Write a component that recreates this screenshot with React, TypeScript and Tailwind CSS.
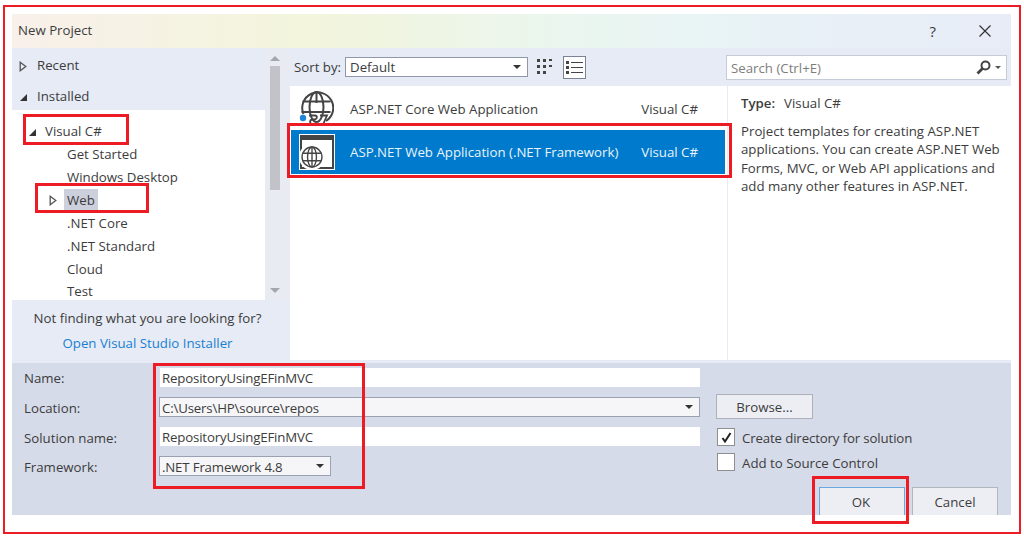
import React from "react";

const font = { fontFamily: '"Open Sans", "Noto Sans", sans-serif' };

function Tri({ open }: { open?: boolean }) {
  return open ? (
    <svg width="9" height="9" viewBox="0 0 9 9"><path d="M8 1v7H1z" fill="#333" /></svg>
  ) : (
    <svg width="8" height="11" viewBox="0 0 8 11"><path d="M1.2 1.2 6.8 5.5 1.2 9.8z" fill="none" stroke="#555" strokeWidth="1.3" /></svg>
  );
}

function Caret() {
  return <svg width="8" height="4" viewBox="0 0 8 4"><path d="M0 0h8L4 4z" fill="#333" /></svg>;
}

function Globe({ size, stroke }: { size: number; stroke: string }) {
  return (
    <svg width={size} height={size} viewBox="0 0 32 32" fill="none" stroke={stroke} strokeWidth="2">
      <circle cx="16" cy="16" r="14.5" />
      <ellipse cx="16" cy="16" rx="6.5" ry="14.5" />
      <path d="M16 1.5v29M2.5 10.5h27M2.5 21.5h27" />
    </svg>
  );
}

function CoreGlobe() {
  return (
    <svg width="35" height="35" viewBox="0 0 35 35" fill="none" stroke="#444" strokeWidth="2">
      <path d="M4.5 23A15.5 15.5 0 1 1 27 30" />
      <ellipse cx="17.5" cy="16" rx="7" ry="15" />
      <path d="M17.5 1v11M3.5 10.5h28M2.5 21h29" />
      <path d="M10 24.5h6c2.5 0 2.5 3.5 0 4h-3c-2.5.5-2.5 4.5 0 4.5h4" strokeWidth="1.8" />
      <path d="M21 24.5h7l-4 9" strokeWidth="1.8" />
      <circle cx="4" cy="27" r="3.2" fill="#1f86d8" stroke="none" />
    </svg>
  );
}

function TreeItem({ label, active, first }: { label: string; active?: boolean; first?: boolean }) {
  return (
    <div className={"flex shrink-0 items-center pl-[37px] " + (first ? "h-[22px]" : "h-[23px]")}>
      <div className="flex w-[18px] justify-start">{active && <Tri />}</div>
      <span className={active ? "bg-[#ccd0dd] px-[3px] -ml-[3px] leading-[23px]" : ""}>{label}</span>
    </div>
  );
}

function Nav() {
  return (
    <div className="flex w-[278px] shrink-0 flex-col">
      <div className="flex h-[252px]">
        <div className="flex w-[253px] flex-col">
          <div className="flex h-[62px] shrink-0 flex-col bg-[#e6ebf5] pt-[6px]">
            <div className="flex h-[24px] items-center pl-[7px]"><div className="flex w-[16px]"><Tri /></div><span className="ml-[2px]">Recent</span></div>
            <div className="mt-[7px] flex h-[24px] items-center pl-[7px]"><div className="flex w-[16px]"><Tri open /></div><span className="ml-[2px]">Installed</span></div>
          </div>
          <div className="flex flex-1 flex-col overflow-hidden bg-white pt-[10px]">
            <div className="flex h-[24px] shrink-0 items-center pl-[16px]"><div className="flex w-[17px]"><Tri open /></div>Visual C#</div>
            <TreeItem first label="Get Started" />
            <TreeItem label="Windows Desktop" />
            <TreeItem active label="Web" />
            <TreeItem label=".NET Core" />
            <TreeItem label=".NET Standard" />
            <TreeItem label="Cloud" />
            <div className="flex h-[22px] shrink-0 items-center pl-[55px]">Test</div>
          </div>
        </div>
        <div className="flex w-[25px] flex-col items-start bg-[#e9ebf3] pl-[5px]">
          <svg className="mt-[8px]" width="10" height="5" viewBox="0 0 10 5"><path d="M5 0l5 5H0z" fill="#a3a6ad" /></svg>
          <div className="mt-[5px] h-[124px] w-[10px] bg-[#c2c3c9]" />
          <svg className="mt-auto mb-[7px]" width="10" height="5" viewBox="0 0 10 5"><path d="M5 5l5-5H0z" fill="#a3a6ad" /></svg>
        </div>
      </div>
      <div className="flex flex-1 flex-col items-center bg-[#e6ebf5] pt-[7px] pr-[7px]">
        <div className="h-[22px] leading-[22px]">Not finding what you are looking for?</div>
        <div className="mt-[5px] text-[#1a7fd0]">Open Visual Studio Installer</div>
      </div>
    </div>
  );
}

function Toolbar() {
  return (
    <div className="flex h-[38px] shrink-0 items-center bg-[#e6ebf5] pl-[4px] pr-[4px]">
      <span className="pt-[2px]">Sort by:</span>
      <div className="ml-[4px] flex h-[20px] w-[183px] items-center justify-between border border-[#8f97a8] bg-white pl-[4px] pr-[6px]">
        <span className="pt-[2px]">Default</span><Caret />
      </div>
      <svg className="ml-[9px]" width="16" height="18" viewBox="0 0 16 18" fill="#444">
        <path d="M0 1h3v3H0zM6 1h3v3H6zM12 1h3v2h-3zM0 7h3v3H0zM6 7h3v3H6zM12 7h3v2h-3zM0 13h3v3H0zM6 13h3v3H6z" />
      </svg>
      <div className="ml-[10px] flex h-[23px] w-[23px] items-center justify-center border border-[#7a8294] bg-white">
        <svg width="17" height="15" viewBox="0 0 17 15" fill="#444">
          <path d="M0 1h3v3H0zM5 2h12v1H5zM0 6h3v3H0zM5 7h12v1H5zM0 11h3v3H0zM5 12h12v1H5z" />
        </svg>
      </div>
      <div className="ml-auto mt-[1px] flex h-[25px] w-[281px] items-center justify-between border border-[#c5cbd8] bg-white pl-[4px] pr-[5px] text-[#7d7d7d]">
        <span className="pt-[2px]">Search (Ctrl+E)</span>
        <span className="flex items-center gap-[4px]">
          <svg width="15" height="15" viewBox="0 0 15 15" fill="none" stroke="#444">
            <circle cx="9.5" cy="5.5" r="4" strokeWidth="2" />
            <path d="M6.5 8.5 1.5 13.5" strokeWidth="2.8" />
          </svg>
          <svg width="6" height="3" viewBox="0 0 6 3"><path d="M0 0h6L3 3z" fill="#555" /></svg>
        </span>
      </div>
    </div>
  );
}

function Templates() {
  return (
    <div className="flex w-[437px] shrink-0 flex-col bg-white">
      <div className="flex h-[44px] items-center pl-[9px] pr-[29px]">
        <div className="flex w-[51px]"><CoreGlobe /></div>
        <span className="pt-[3px]">ASP.NET Core Web Application</span>
        <span className="ml-auto pt-[3px]">Visual C#</span>
      </div>
      <div className="ml-[1px] mr-[2px] flex h-[44px] items-center bg-[#007acc] pl-[8px] pr-[27px] text-[#eaf4fb]">
        <div className="flex w-[51px]">
          <div className="relative flex h-[36px] w-[36px] flex-col items-start bg-white p-[1px]">
            <div className="h-full w-full border-[2px] border-t-[5px] border-[#444] bg-white" />
            <div className="absolute bottom-0 left-0 rounded-full bg-white p-[2px]"><Globe size={22} stroke="#444" /></div>
          </div>
        </div>
        <span className="pt-[2px]">ASP.NET Web Application (.NET Framework)</span>
        <span className="ml-auto pt-[2px]">Visual C#</span>
      </div>
    </div>
  );
}

function Details() {
  return (
    <div className="flex min-w-0 flex-1 flex-col border-l border-[#e6ebf5] bg-white pl-[13px] pt-[9px]">
      <div className="flex h-[18px] items-center">
        <b className="font-semibold">Type:</b><span className="ml-[9px]">Visual C#</span>
      </div>
      <p className="mt-[9px] w-[270px] leading-[18.3px]">
        Project templates for creating ASP.NET applications. You can create ASP.NET Web Forms, MVC, or Web API applications and add many other features in ASP.NET.
      </p>
    </div>
  );
}

function Field({ select, children, className }: { select?: boolean; children: React.ReactNode; className?: string }) {
  return (
    <div className={"flex items-center justify-between pl-[2px] " + (className ?? "") + (select ? " border border-[#9aa1b0] bg-[#f6f6f8] pr-[6px]" : " bg-white ml-[1px]")}>
      <span className="pt-[3px] tracking-[-0.17px]">{children}</span>
      {select && <Caret />}
    </div>
  );
}

function Check({ checked, label, tight }: { checked?: boolean; label: string; tight?: boolean }) {
  return (
    <div className="flex h-[18px] items-center">
      <div className="flex h-[18px] w-[18px] items-center justify-center border border-[#8f8f8f] bg-white">
        {checked && <svg width="11" height="11" viewBox="0 0 11 11"><path d="M1.5 6 4 9.5 9.5 1" fill="none" stroke="#222" strokeWidth="2" /></svg>}
      </div>
      <span className={"ml-[7px] pt-[3px] " + (tight ? "tracking-[-0.14px]" : "")}>{label}</span>
    </div>
  );
}

function BottomPanel() {
  return (
    <div className="mt-[3px] flex flex-1 overflow-hidden bg-[#d6dbe9] pl-[12px]">
      <div className="flex w-[135px] flex-col pt-[6px]">
        <div className="flex h-[20px] items-center">Name:</div>
        <div className="mt-[10px] flex h-[20px] items-center">Location:</div>
        <div className="mt-[10px] flex h-[20px] items-center">Solution name:</div>
        <div className="mt-[9px] flex h-[20px] items-center">Framework:</div>
      </div>
      <div className="flex w-[541px] flex-col pt-[5px]">
        <Field className="h-[19px]">RepositoryUsingEFinMVC</Field>
        <Field select className="mt-[10px] h-[20px]">C:\Users\HP\source\repos</Field>
        <Field className="mt-[10px] h-[19px]">RepositoryUsingEFinMVC</Field>
        <Field select className="mt-[10px] h-[20px] w-[172px]">.NET Framework 4.8</Field>
      </div>
      <div className="ml-[16px] flex flex-1 flex-col pt-[31px]">
        <div className="flex h-[26px] w-[97px] items-center justify-center border border-[#aeb1b9] bg-[#eceef4] pt-[2px]">Browse...</div>
        <div className="mt-[9px] pl-[1px]"><Check checked tight label="Create directory for solution" /></div>
        <div className="mt-[7px] pl-[1px]"><Check label="Add to Source Control" /></div>
        <div className="mt-[16px] flex gap-[7px] pl-[103px]">
          <div className="flex h-[28px] w-[86px] items-center justify-center border border-b-0 border-[#6aa8e0] bg-[#eceef4] pt-[2px] pr-[2px]">OK</div>
          <div className="flex h-[28px] w-[86px] items-center justify-center border border-b-0 border-[#b4b6bd] bg-[#eceef4] pt-[2px]">Cancel</div>
        </div>
      </div>
    </div>
  );
}

export default function App() {
  return (
    <div style={font} className="relative h-[537px] w-[1024px] overflow-hidden bg-white pl-[12px] pt-[14px] text-[13.25px] text-[#3c3c3c]">
      <div className="flex h-[501px] w-[999px] flex-col bg-[#e6ebf5]">
        <div className="flex h-[34px] shrink-0 items-center bg-[linear-gradient(90deg,#f8f0ea_0%,#f3f5dc_30%,#eaf6ee_55%,#e8f3f6_72%,#e8ecf7_100%)] pl-[6px] pr-[20px]">
          <span>New Project</span>
          <span className="ml-auto text-[15px]">?</span>
          <svg className="ml-[43px]" width="12" height="12" viewBox="0 0 12 12"><path d="M.5.5l11 11M11.5.5l-11 11" stroke="#333" strokeWidth="1.2" /></svg>
        </div>
        <div className="flex h-[312px] shrink-0">
          <Nav />
          <div className="flex min-w-0 flex-1 flex-col">
            <Toolbar />
            <div className="flex flex-1">
              <Templates />
              <Details />
            </div>
          </div>
        </div>
        <BottomPanel />
      </div>

      <div className="pointer-events-none absolute left-[3px] top-[5px] h-[529px] w-[1018px] border-[2px] border-[#ed1c24]" />
      <div className="pointer-events-none absolute left-[23px] top-[114px] h-[31px] w-[106px] border-[3px] border-[#ed1c24]" />
      <div className="pointer-events-none absolute left-[35px] top-[183px] h-[30px] w-[114px] border-[3px] border-[#ed1c24]" />
      <div className="pointer-events-none absolute left-[287px] top-[123px] h-[55px] w-[445px] border-[3px] border-[#ed1c24]" />
      <div className="pointer-events-none absolute left-[153px] top-[363px] h-[126px] w-[212px] border-[3px] border-[#ed1c24]" />
      <div className="pointer-events-none absolute left-[812px] top-[476px] h-[48px] w-[97px] border-[3px] border-[#ed1c24]" />
    </div>
  );
}
